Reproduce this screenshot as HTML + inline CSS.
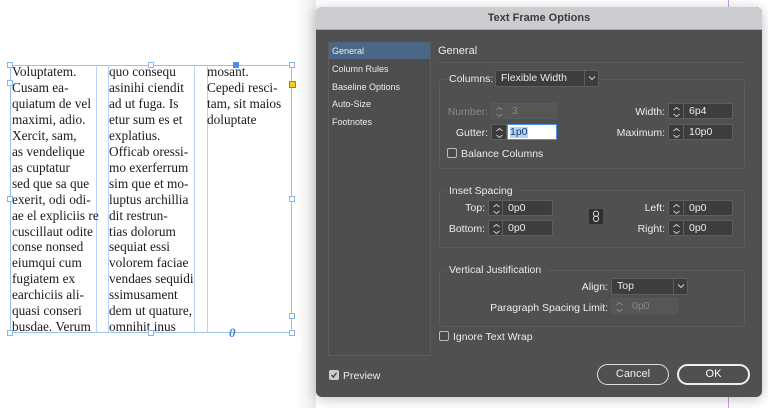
<!DOCTYPE html>
<html><head><meta charset="utf-8"><style>
*{margin:0;padding:0;box-sizing:border-box}
body{width:768px;height:408px;background:#fff;position:relative;overflow:hidden;font-family:"Liberation Sans",sans-serif}
.a{position:absolute}
.t{position:absolute;font-size:10.5px;color:#ececec;white-space:nowrap;line-height:12px}
.r{text-align:right}
.st{position:absolute;background:#3b3b3b;border:1px solid #5e5e5e;border-radius:2px}
.st svg{position:absolute;left:3px;top:2px}
.fd{position:absolute;background:#3d3d3d;border:1px solid #5e5e5e;border-radius:2px;font-size:10.5px;color:#ececec;padding-left:5px;line-height:14px}
.grp{position:absolute;border:1px solid #5c5c5c;border-radius:3px}
.col{position:absolute;font-family:"Liberation Serif",serif;font-size:13.3px;line-height:15.95px;color:#1a1a1a;white-space:nowrap}
.h{position:absolute;width:6px;height:6px;border:1px solid #8ab4f0;background:#fff}
.cb{position:absolute;width:10px;height:10px;border:1px solid #bbb;border-radius:2px;background:#4a4a4a}
</style></head><body>
<div class="a" style="left:296px;top:0;width:20px;height:408px;background:linear-gradient(90deg,#fff,#eaeaea)"></div>
<div class="a" style="left:728px;top:0;width:1px;height:8px;background:#c9a0e0"></div>
<div class="a" style="left:728px;top:396px;width:1px;height:12px;background:#c9a0e0"></div>

<div class="a" style="left:10px;top:65px;width:282px;height:268px;border:1px solid #9cc0f0"></div>
<div class="a" style="left:96px;top:65px;width:1px;height:268px;background:#b8d2f5"></div>
<div class="a" style="left:108px;top:65px;width:1px;height:268px;background:#b8d2f5"></div>
<div class="a" style="left:194px;top:65px;width:1px;height:268px;background:#b8d2f5"></div>
<div class="a" style="left:207px;top:65px;width:1px;height:268px;background:#b8d2f5"></div>
<div class="col" style="left:12px;top:64px">Voluptatem.<br>Cusam ea-<br>quiatum de vel<br>maximi, adio.<br>Xercit, sam,<br>as vendelique<br>as cuptatur<br>sed que sa que<br>exerit, odi odi-<br>ae el expliciis re<br>cuscillaut odite<br>conse nonsed<br>eiumqui cum<br>fugiatem ex<br>earchiciis ali-<br>quasi conseri<br>busdae. Verum</div>
<div class="col" style="left:109px;top:64px">quo consequ<br>asinihi ciendit<br>ad ut fuga. Is<br>etur sum es et<br>explatius.<br>Officab oressi-<br>mo exerferrum<br>sim que et mo-<br>luptus archillia<br>dit restrun-<br>tias dolorum<br>sequiat essi<br>volorem faciae<br>vendaes sequidi<br>ssimusament<br>dem ut quature,<br>omnihit inus</div>
<div class="col" style="left:207px;top:64px">mosant.<br>Cepedi resci-<br>tam, sit maios<br>doluptate</div>
<div class="a" style="left:0;top:334px;width:300px;height:20px;background:#fff"></div>
<div class="h" style="left:7px;top:62px"></div><div class="h" style="left:148px;top:62px"></div><div class="h" style="left:289px;top:62px"></div>
<div class="h" style="left:7px;top:196px"></div><div class="h" style="left:289px;top:196px"></div>
<div class="h" style="left:7px;top:330px"></div><div class="h" style="left:148px;top:330px"></div><div class="h" style="left:289px;top:330px"></div>
<div class="h" style="left:289px;top:313px"></div><div class="h" style="left:7px;top:80px"></div>
<div class="a" style="left:233px;top:62px;width:6px;height:6px;background:#4a90e8"></div>
<div class="a" style="left:289px;top:81px;width:7px;height:7px;background:#f2d020;border:1px solid #a08a00"></div>
<div class="a" style="left:229px;top:325px;font-family:'Liberation Serif',serif;font-style:italic;font-weight:bold;color:#4a80d0;font-size:13px">0</div>

<div class="a" style="left:316px;top:7px;width:446px;height:390px;background:#505050;border-radius:6px;overflow:hidden;box-shadow:0 2px 12px rgba(0,0,0,.25)">
<div class="a" style="left:0;top:0;width:446px;height:23px;background:#cbcdd0;border-bottom:1px solid #a8a8a8;text-align:center;font-size:11px;font-weight:bold;color:#3a3a3a;line-height:22px">Text Frame Options</div>
</div>
<div class="a" style="left:328px;top:42px;width:103px;height:314px;border:1px solid #5c5c5c;background:#4e4e4e"></div>
<div class="a" style="left:329px;top:42px;width:101px;height:17px;background:#4b6786"></div>
<div class="t" style="left:332px;top:45px;font-size:9px;color:#eee">General</div>
<div class="t" style="left:332px;top:63px;font-size:9px">Column Rules</div>
<div class="t" style="left:332px;top:81px;font-size:9px">Baseline Options</div>
<div class="t" style="left:332px;top:98px;font-size:9px">Auto-Size</div>
<div class="t" style="left:332px;top:116px;font-size:9px">Footnotes</div>

<div class="t" style="left:438px;top:45px;font-size:11px">General</div>
<div class="a" style="left:438px;top:62px;width:307px;height:1px;background:#5c5c5c"></div>

<div class="grp" style="left:439px;top:79px;width:306px;height:90px"></div>
<div class="a" style="left:446px;top:70px;width:156px;height:18px;background:#505050"></div>
<div class="t" style="left:449px;top:73px">Columns:</div>
<div class="fd" style="left:495px;top:70px;width:104px;height:17px">Flexible Width</div>
<div class="a" style="left:584px;top:71px;width:1px;height:15px;background:#5e5e5e"></div>
<svg class="a" style="left:588px;top:75px" width="8" height="6"><path d="M1 1.5L4 4.5L7 1.5" fill="none" stroke="#ccc" stroke-width="1.1"/></svg>

<div class="t r" style="left:430px;top:106px;width:58px;color:#8a8a8a">Number:</div>
<div class="st" style="left:491px;top:103px;width:16px;height:16px;background:#555;border-color:#5a5a5a"><svg width="9" height="12"><path d="M1.5 4L4.5 1.5L7.5 4M1.5 8L4.5 10.5L7.5 8" fill="none" stroke="#888" stroke-width="1"/></svg></div>
<div class="fd" style="left:506px;top:103px;width:51px;height:16px;background:#565656;border-color:#5a5a5a;color:#888">3</div>

<div class="t r" style="left:430px;top:127px;width:58px">Gutter:</div>
<div class="st" style="left:491px;top:124px;width:16px;height:16px"><svg width="9" height="12"><path d="M1.5 4L4.5 1.5L7.5 4M1.5 8L4.5 10.5L7.5 8" fill="none" stroke="#ccc" stroke-width="1"/></svg></div>
<div class="a" style="left:507px;top:124px;width:50px;height:16px;background:#fff;border:1px solid #4a8fe0"></div>
<div class="a" style="left:510px;top:127px;width:18px;height:11px;background:#b5d3fa;font-size:10.5px;line-height:11px;color:#1a3a6a">1p0</div>

<div class="t r" style="left:590px;top:106px;width:75px">Width:</div>
<div class="st" style="left:668px;top:103px;width:16px;height:16px"><svg width="9" height="12"><path d="M1.5 4L4.5 1.5L7.5 4M1.5 8L4.5 10.5L7.5 8" fill="none" stroke="#ccc" stroke-width="1"/></svg></div>
<div class="fd" style="left:683px;top:103px;width:50px;height:16px">6p4</div>
<div class="t r" style="left:590px;top:127px;width:75px">Maximum:</div>
<div class="st" style="left:668px;top:124px;width:16px;height:16px"><svg width="9" height="12"><path d="M1.5 4L4.5 1.5L7.5 4M1.5 8L4.5 10.5L7.5 8" fill="none" stroke="#ccc" stroke-width="1"/></svg></div>
<div class="fd" style="left:683px;top:124px;width:50px;height:16px">10p0</div>

<div class="cb" style="left:447px;top:148px"></div>
<div class="t" style="left:461px;top:148px">Balance Columns</div>

<div class="grp" style="left:439px;top:190px;width:306px;height:58px"></div>
<div class="a" style="left:446px;top:184px;width:72px;height:14px;background:#505050"></div>
<div class="t" style="left:449px;top:185px">Inset Spacing</div>
<div class="t r" style="left:430px;top:202px;width:55px">Top:</div>
<div class="st" style="left:488px;top:200px;width:15px;height:16px"><svg width="9" height="12"><path d="M1.5 4L4.5 1.5L7.5 4M1.5 8L4.5 10.5L7.5 8" fill="none" stroke="#ccc" stroke-width="1"/></svg></div>
<div class="fd" style="left:502px;top:200px;width:51px;height:16px">0p0</div>
<div class="t r" style="left:430px;top:223px;width:55px">Bottom:</div>
<div class="st" style="left:488px;top:220px;width:15px;height:16px"><svg width="9" height="12"><path d="M1.5 4L4.5 1.5L7.5 4M1.5 8L4.5 10.5L7.5 8" fill="none" stroke="#ccc" stroke-width="1"/></svg></div>
<div class="fd" style="left:502px;top:220px;width:51px;height:16px">0p0</div>
<div class="a" style="left:589px;top:209px;width:14px;height:15px;background:#2e2e2e;border-radius:2px"></div>
<svg class="a" style="left:592px;top:210px" width="8" height="13"><rect x="1.5" y="1" width="5" height="5.5" rx="2.5" fill="none" stroke="#ddd" stroke-width="1"/><rect x="1.5" y="6" width="5" height="5.5" rx="2.5" fill="none" stroke="#ddd" stroke-width="1"/></svg>
<div class="t r" style="left:590px;top:202px;width:75px">Left:</div>
<div class="st" style="left:668px;top:200px;width:16px;height:16px"><svg width="9" height="12"><path d="M1.5 4L4.5 1.5L7.5 4M1.5 8L4.5 10.5L7.5 8" fill="none" stroke="#ccc" stroke-width="1"/></svg></div>
<div class="fd" style="left:683px;top:200px;width:50px;height:16px">0p0</div>
<div class="t r" style="left:590px;top:223px;width:75px">Right:</div>
<div class="st" style="left:668px;top:220px;width:16px;height:16px"><svg width="9" height="12"><path d="M1.5 4L4.5 1.5L7.5 4M1.5 8L4.5 10.5L7.5 8" fill="none" stroke="#ccc" stroke-width="1"/></svg></div>
<div class="fd" style="left:683px;top:220px;width:50px;height:16px">0p0</div>

<div class="grp" style="left:439px;top:270px;width:306px;height:57px"></div>
<div class="a" style="left:446px;top:263px;width:102px;height:14px;background:#505050"></div>
<div class="t" style="left:449px;top:264px">Vertical Justification</div>
<div class="t r" style="left:540px;top:281px;width:68px">Align:</div>
<div class="fd" style="left:611px;top:278px;width:77px;height:17px">Top</div>
<div class="a" style="left:673px;top:279px;width:1px;height:15px;background:#5e5e5e"></div>
<svg class="a" style="left:677px;top:283px" width="8" height="6"><path d="M1 1.5L4 4.5L7 1.5" fill="none" stroke="#ccc" stroke-width="1.1"/></svg>
<div class="t r" style="left:460px;top:302px;width:148px">Paragraph Spacing Limit:</div>
<div class="st" style="left:611px;top:298px;width:16px;height:16px;background:#565656;border-color:#5a5a5a"><svg width="9" height="12"><path d="M1.5 4L4.5 1.5L7.5 4M1.5 8L4.5 10.5L7.5 8" fill="none" stroke="#888" stroke-width="1"/></svg></div>
<div class="fd" style="left:626px;top:298px;width:52px;height:16px;background:#565656;border-color:#5a5a5a;color:#888">0p0</div>

<div class="cb" style="left:439px;top:331px"></div>
<div class="t" style="left:453px;top:331px">Ignore Text Wrap</div>

<div class="a" style="left:329px;top:370px;width:10px;height:10px;background:#ccc;border-radius:2px"></div>
<svg class="a" style="left:330px;top:371px" width="8" height="8"><path d="M1.5 4L3.3 6L6.5 1.8" fill="none" stroke="#444" stroke-width="1.4"/></svg>
<div class="t" style="left:343px;top:370px">Preview</div>

<div class="a" style="left:597px;top:364px;width:72px;height:21px;border:1px solid #e0e0e0;border-radius:11px;text-align:center;font-size:11px;color:#eee;line-height:19px">Cancel</div>
<div class="a" style="left:677px;top:364px;width:73px;height:21px;border:2px solid #f0f0f0;border-radius:11px;text-align:center;font-size:11px;color:#fff;line-height:17px">OK</div>
</body></html>
